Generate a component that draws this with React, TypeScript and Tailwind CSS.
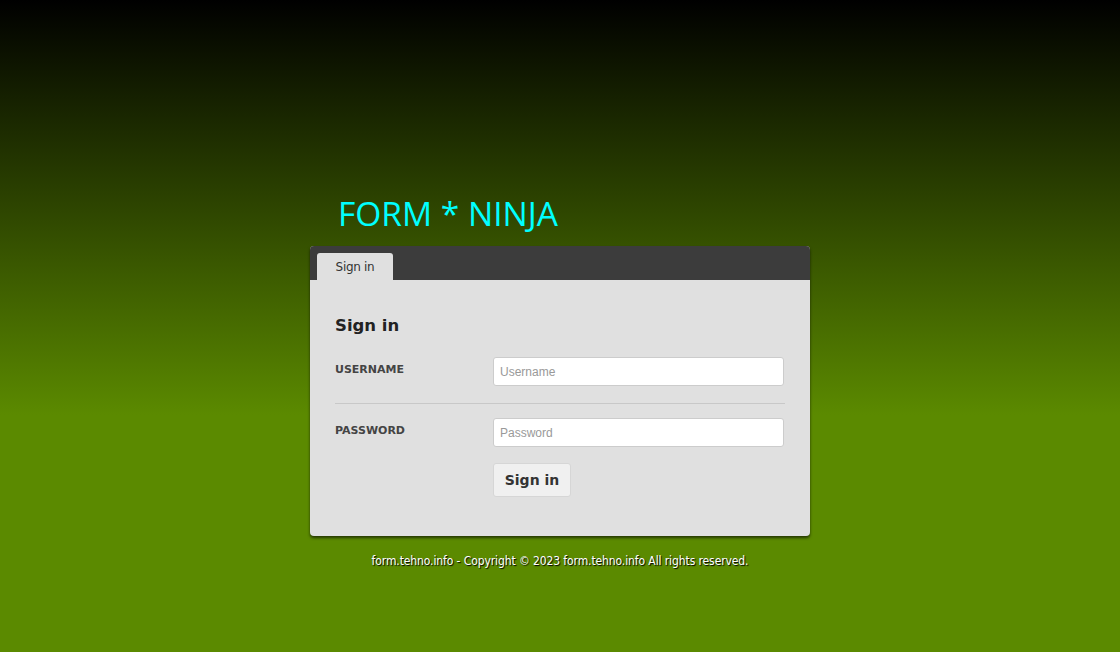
import React, { useState } from 'react';

const App: React.FC = () => {
  const [username, setUsername] = useState('');
  const [password, setPassword] = useState('');

  return (
    <div className="min-h-screen h-[652px] bg-[linear-gradient(to_bottom,#000000_0px,#5b8a00_415px,#5b8a00_100%)] font-['Tahoma','DejaVu_Sans',sans-serif]">
      <div className="w-[500px] mx-auto pt-[189px]">
        {/* Title */}
        <h1 className="pl-[28px] text-[33.5px] leading-[48px] text-[#00ffff] font-['Open_Sans','Noto_Sans',sans-serif] mb-[9px]">
          FORM * NINJA
        </h1>

        {/* Card */}
        <div className="rounded-[4px] overflow-hidden shadow-[0_2px_3px_rgba(0,0,0,0.6)] bg-[#e0e0e0]">
          <div className="bg-[#3c3c3c] h-[34px] px-[7px] pt-[7px] flex items-end">
            <div className="h-[27px] w-[76px] bg-[#e0e0e0] rounded-t-[3px] flex items-center justify-center text-[12px] text-[#333] font-['DejaVu_Sans',sans-serif] tracking-[-0.3px]">
              Sign in
            </div>
          </div>

          <div className="px-[25px] pt-[35px] pb-[39px]">
            <h2 className="text-[16.5px] font-bold text-[#222] font-['DejaVu_Sans',sans-serif] leading-[22px] mb-[20px]">
              Sign in
            </h2>

            <div className="flex">
              <label className="w-[158px] pt-[5px] text-[11px] font-bold text-[#444] font-['DejaVu_Sans',sans-serif]">
                USERNAME
              </label>
              <input
                value={username}
                onChange={(e) => setUsername(e.target.value)}
                placeholder="Username"
                className="w-[291px] h-[29px] bg-white border border-[#ccc] rounded-[3px] px-[6px] text-[12px] font-['Liberation_Sans',Arial,sans-serif] text-[#333] placeholder:text-[#999] outline-none"
              />
            </div>

            <div className="border-t border-[#c8c8c8] mt-[17px] mb-[14px]" />

            <div className="flex">
              <label className="w-[158px] pt-[5px] text-[11px] font-bold text-[#444] font-['DejaVu_Sans',sans-serif]">
                PASSWORD
              </label>
              <div className="flex flex-col gap-[16px]">
                <input
                  type="password"
                  value={password}
                  onChange={(e) => setPassword(e.target.value)}
                  placeholder="Password"
                  className="w-[291px] h-[29px] bg-white border border-[#ccc] rounded-[3px] px-[6px] text-[12px] font-['Liberation_Sans',Arial,sans-serif] text-[#333] placeholder:text-[#999] outline-none"
                />
                <button className="w-[78px] h-[34px] bg-[#f0f0f0] border border-[#d6d6d6] rounded-[3px] text-[14px] font-bold text-[#333] font-['DejaVu_Sans',sans-serif]">
                  Sign in
                </button>
              </div>
            </div>
          </div>
        </div>

        <p className="mt-[16px] text-center text-[12px] text-white font-['DejaVu_Sans_Condensed','DejaVu_Sans',sans-serif] tracking-[-0.1px] [text-shadow:1px_1px_1px_#000]">
          form.tehno.info - Copyright © 2023 form.tehno.info All rights reserved.
        </p>
      </div>
    </div>
  );
};

export default App;
